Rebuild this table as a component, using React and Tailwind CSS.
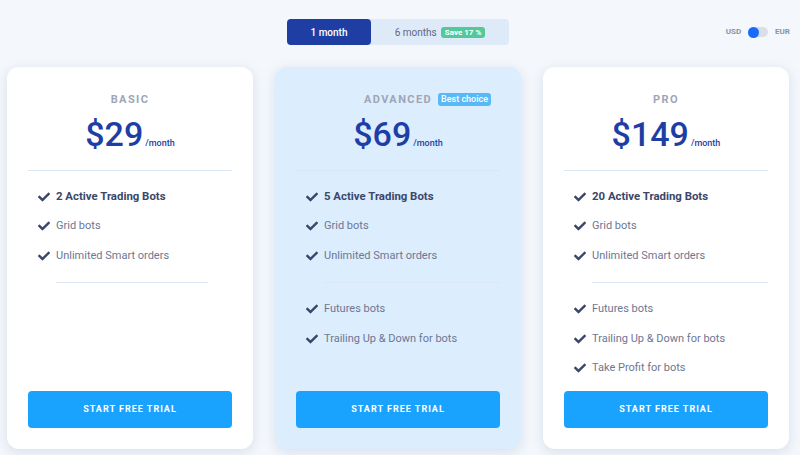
import React from "react";
import { FaCheck } from "react-icons/fa";

function Feature({ text, bold }) {
  return (
    <li className="flex h-[29.5px] items-center">
      <FaCheck className="mr-[6px] h-[12px] w-[12px] text-[#3b4769]" />
      <span
        className={
          bold
            ? "text-[11.4px] font-bold text-[#3b4769]"
            : "text-[11px] font-normal text-[#6c7793]"
        }
      >
        {text}
      </span>
    </li>
  );
}

function Card({ title, price, features1, features2, featured, badge, dividerW }) {
  return (
    <div
      className={
        "flex h-[382px] w-[246px] flex-col rounded-[12px] px-[21px] pb-[21px] pt-[25px] shadow-[0_3px_12px_rgba(140,165,200,0.28)] " +
        (featured ? "bg-[#dcedfd]" : "bg-white")
      }
    >
      <div className="flex h-[16px] items-center justify-center">
        <span className="relative text-[11px] font-bold leading-[16px] tracking-[1.4px] text-[#9ea6b6]">
          {title}
          {badge && (
            <span className="absolute left-full top-[1px] ml-[6px] whitespace-nowrap rounded-[3px] bg-[#58b9f6] px-[3px] text-[9px] font-medium leading-[13px] tracking-normal text-white">
              {badge}
            </span>
          )}
        </span>
      </div>
      <div className="mt-[6px] flex h-[40px] items-baseline justify-center text-[#1e3ea5]">
        <span className="text-[34px] font-medium leading-[40px]">{price}</span>
        <span className="ml-[2px] text-[9px] font-medium">/month</span>
      </div>
      <div className="mt-[16px] h-px bg-[#dbe6f4]" />
      <ul className="mt-[11px] pl-[10px]">
        {features1.map((f, i) => (
          <Feature key={i} text={f} bold={i === 0} />
        ))}
      </ul>
      <div className="ml-[28px] mt-[11px] h-px bg-[#dde6f1]" style={{ width: dividerW }} />
      {features2.length > 0 && (
        <ul className="mt-[12px] pl-[10px]">
          {features2.map((f, i) => (
            <Feature key={i} text={f} />
          ))}
        </ul>
      )}
      <button className="mt-auto h-[37px] w-full rounded-[4px] bg-[#19a3fe] text-[9px] font-bold tracking-[1px] text-white">
        START FREE TRIAL
      </button>
    </div>
  );
}

export default function App() {
  const base = ["Active Trading Bots", "Grid bots", "Unlimited Smart orders"];
  return (
    <div
      className="h-[455px] w-[800px] overflow-hidden bg-[#f4f7fb]"
      style={{ fontFamily: "Roboto, 'Noto Sans', sans-serif" }}
    >
      <div className="grid grid-cols-[1fr_auto_1fr] items-center pt-[19px]">
        <div />
        <div className="mr-[4px] flex h-[26px] w-[222px] rounded-[4px] bg-[#dfeaf9]">
          <div className="flex w-[84px] items-center justify-center rounded-[4px] bg-[#1f3ea3] text-[10px] font-medium text-white">
            1 month
          </div>
          <div className="flex flex-1 items-center justify-center gap-[4px] text-[10px] text-[#5d6680]">
            <span>6 months</span>
            <span className="rounded-[3px] bg-[#52c99b] px-[4px] text-[8px] font-bold leading-[11px] text-white">
              Save 17 %
            </span>
          </div>
        </div>
        <div className="flex items-center justify-end pr-[10px] text-[8px] font-bold text-[#8a93a5]">
          <span>USD</span>
          <span className="mx-[7px] flex h-[10px] w-[20px] items-center rounded-full bg-[#d9dee7]">
            <span className="h-[11px] w-[11px] rounded-full bg-[#1a6cf6]" />
          </span>
          <span>EUR</span>
        </div>
      </div>
      <div className="mt-[22px] flex gap-[22px] pl-[7px]">
        <Card
          title="BASIC"
          price="$29"
          features1={["2 " + base[0], base[1], base[2]]}
          features2={[]}
          dividerW={152}
        />
        <Card
          title="ADVANCED"
          badge="Best choice"
          featured
          price="$69"
          features1={["5 " + base[0], base[1], base[2]]}
          features2={["Futures bots", "Trailing Up & Down for bots"]}
          dividerW={176}
        />
        <Card
          title="PRO"
          price="$149"
          features1={["20 " + base[0], base[1], base[2]]}
          features2={["Futures bots", "Trailing Up & Down for bots", "Take Profit for bots"]}
          dividerW={176}
        />
      </div>
    </div>
  );
}
